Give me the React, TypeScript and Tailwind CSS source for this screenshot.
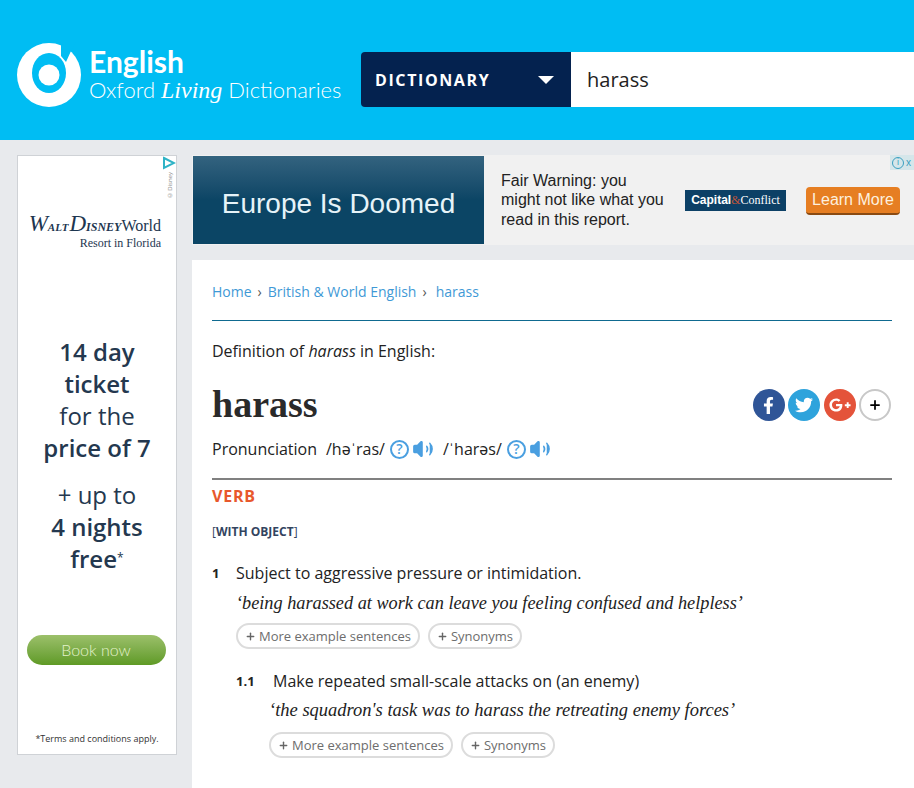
import { Volume2, Plus } from "lucide-react"
import { FaFacebookF, FaTwitter, FaGooglePlusG } from "react-icons/fa"

function Logo() {
  return (
    <svg width="66" height="66" viewBox="0 0 66 66" className="shrink-0">
      <circle cx="33" cy="33" r="32" fill="#fff" />
      <ellipse cx="33" cy="31" rx="17" ry="20" fill="#00bdf3" />
      <polygon points="45,-1 45,14 50,20 55,9 60,-1" fill="#00bdf3" />
      <circle cx="33" cy="33" r="10.5" fill="#fff" />
    </svg>
  )
}

function HelpAudio() {
  return (
    <span className="inline-flex items-center gap-[3px] ml-[5px]">
      <span className="w-[19px] h-[19px] rounded-full border-2 border-[#4a9fe0] text-[#4a9fe0] text-[14px] font-semibold flex items-center justify-center leading-none">
        ?
      </span>
      <Volume2 size={22} className="text-[#4a9fe0]" fill="#4a9fe0" strokeWidth={1.5} />
    </span>
  )
}

function Pill({ label }: { label: string }) {
  return (
    <span className="h-[26px] px-[7px] rounded-full border-2 border-[#dcdcdc] text-[13px] text-[#6d6d6d] flex items-center gap-[3px] leading-none">
      <Plus size={11} strokeWidth={3} className="text-[#666]" />
      {label}
    </span>
  )
}

function Social({ className, children }: { className: string; children: React.ReactNode }) {
  return (
    <span className={`w-[32px] h-[32px] rounded-full flex items-center justify-center text-white ${className}`}>
      {children}
    </span>
  )
}

export default function App() {
  return (
    <div className="w-[914px] h-[788px] overflow-hidden bg-[#e8eaed] font-['Open_Sans',sans-serif] text-[#222]">
      {/* Header */}
      <header className="h-[140px] bg-[#00bdf3] flex items-start pl-[16px] pt-[42px]">
        <Logo />
        <div className="ml-[7px] w-[260px] text-white font-['Lato',sans-serif] mt-[4px]">
          <div className="text-[30px] font-bold leading-[30px]">English</div>
          <div className="text-[22px] font-light leading-[28px] whitespace-nowrap">
            Oxford <span className="inline-block leading-[22px] font-['Liberation_Serif',serif] italic text-[24px]">Living</span> Dictionaries
          </div>
        </div>
        <div className="ml-[12px] flex-1 h-[55px] flex mt-[10px]">
          <div className="w-[210px] bg-[#04224f] rounded-l-[4px] flex items-center justify-between pl-[14px] pr-[17px] text-white">
            <span className="text-[16px] font-bold tracking-[1.6px]">DICTIONARY</span>
            <span className="w-0 h-0 border-l-[8px] border-r-[8px] border-t-[8px] border-l-transparent border-r-transparent border-t-white" />
          </div>
          <div className="flex-1 bg-white flex items-center pl-[16px] text-[20px] text-[#222]">harass</div>
        </div>
      </header>

      <div className="flex items-start pl-[17px] pt-[15px] gap-[15px]">
        {/* Side ad */}
        <aside className="relative w-[160px] h-[600px] shrink-0 bg-white border border-[#cfd2d6] flex flex-col items-center text-[#24384f]">
          <svg width="14" height="14" viewBox="0 0 14 14" className="absolute top-0 right-0">
            <path d="M2 2 L12 7 L2 12 Z" fill="none" stroke="#2fb3c6" strokeWidth="2" />
          </svg>
          <span className="absolute top-[16px] right-[1px] text-[6px] text-[#888] [writing-mode:vertical-rl] rotate-180">©Disney</span>
          <div className="mt-[58px] self-start ml-[13px] w-[130px] font-['Liberation_Serif',serif] text-[#1d3650] text-right">
            <div className="whitespace-nowrap text-[16px] leading-[20px] flex items-baseline justify-end">
              <span className="italic text-[23px] leading-[20px]">W</span>
              <span className="italic font-bold text-[11px] leading-[20px]">ALT</span>
              <span className="italic text-[23px] leading-[20px] ml-[1px]">D</span>
              <span className="italic font-bold text-[12px] leading-[20px]">ISNEY</span>
              <span>World</span>
            </div>
            <div className="text-[12px] leading-[12px]">Resort in Florida</div>
          </div>
          <div className="mt-[87px] text-[24px] leading-[32px] text-center">
            <div className="font-semibold">14 day</div>
            <div className="font-semibold">ticket</div>
            <div>for the</div>
            <div className="font-semibold">price of 7</div>
            <div className="mt-[15px]">+ up to</div>
            <div className="font-semibold">4 nights</div>
            <div className="font-semibold">
              free<sup className="text-[12px] font-normal">*</sup>
            </div>
          </div>
          <div className="mt-[60px] -ml-[2px] w-[139px] h-[30px] rounded-full bg-gradient-to-b from-[#9cc06a] to-[#5f9a24] text-[#e4f2cc] text-[16px] font-['Lato',sans-serif] font-light flex items-center justify-center">
            Book now
          </div>
          <div className="mt-[67px] text-[9px] text-[#333]">*Terms and conditions apply.</div>
        </aside>

        <div className="flex-1 min-w-0">
          {/* Top ad */}
          <div className="relative h-[90px] bg-[#f1f1f1] flex items-center pl-[1px] font-['Liberation_Sans',sans-serif]">
            <div className="w-[291px] h-[88px] pt-[8px] bg-gradient-to-b from-[#33637f] via-[#0b4565] to-[#0b4565] text-[#e6f3f8] text-[28px] flex items-center justify-center">
              Europe Is Doomed
            </div>
            <div className="ml-[17px] w-[168px] text-[16px] leading-[19.5px] text-[#222]">
              Fair Warning: you might not like what you read in this report.
            </div>
            <div className="ml-[16px] w-[101px] h-[21px] bg-[#0c4066] text-white text-[12px] flex items-center justify-center whitespace-nowrap font-['Liberation_Serif',serif]">
              <span className="font-bold font-['Liberation_Sans',sans-serif]">Capital</span>
              <span className="text-[#c0563a]">&amp;</span>
              Conflict
            </div>
            <div className="ml-[20px] mt-[2px] w-[94px] h-[28px] bg-[#e67e22] border-b-2 border-[#8a4a12] rounded-[4px] text-[#fdf0df] text-[16px] flex items-center justify-center">
              Learn More
            </div>
            <div className="absolute top-0 right-0 h-[15px] w-[24px] bg-[#d5e6ea] flex items-center text-[#3a9fc0] text-[10px] leading-none pl-[2px] gap-[2px]">
              <span className="w-[12px] h-[12px] rounded-full border border-[#3a9fc0] flex items-center justify-center text-[9px]">i</span>
              <span>x</span>
            </div>
          </div>

          {/* Entry */}
          <main className="mt-[15px] bg-white pl-[20px] pr-[22px] h-[600px]">
            <div className="h-[61px] border-b border-[#0f6a90] flex items-center gap-[6px] text-[14px] text-[#3f99d6] pt-[2px]">
              <span>Home</span>
              <span className="text-[#555]">›</span>
              <span>British &amp; World English</span>
              <span className="text-[#555]">›</span>
              <span className="ml-[3px]">harass</span>
            </div>
            <p className="mt-[19px] text-[16px] leading-[22px]">
              Definition of <em>harass</em> in English:
            </p>
            <div className="mt-[22px] flex items-center justify-between h-[42px]">
              <h1 className="font-['Liberation_Serif',serif] font-bold text-[38px] text-[#2a2a2a] leading-none -mt-[2px]">harass</h1>
              <div className="flex items-center gap-[3.5px] mr-[1px]">
                <Social className="bg-[#2f5597]"><FaFacebookF size={17} /></Social>
                <Social className="bg-[#2ea3dc]"><FaTwitter size={18} /></Social>
                <Social className="bg-[#e4533a]"><FaGooglePlusG size={22} /></Social>
                <span className="w-[32px] h-[32px] rounded-full border-2 border-[#c8c8c8] flex items-center justify-center text-black">
                  <Plus size={14} strokeWidth={3} />
                </span>
              </div>
            </div>
            <div className="mt-[10px] flex items-center text-[16px] h-[26px]">
              <span>Pronunciation</span>
              <span className="ml-[9px]">/həˈras/</span>
              <HelpAudio />
              <span className="ml-[9px]">/ˈharəs/</span>
              <HelpAudio />
            </div>
            <div className="mt-[16px] border-t-2 border-[#808080] pt-[5px] text-[16px] font-bold text-[#e8582c] tracking-[0.8px] leading-[22px]">
              VERB
            </div>
            <div className="mt-[15px] text-[12px] leading-[20px] text-[#33445f]">
              [<span className="font-bold">WITH OBJECT</span>]
            </div>

            <div className="mt-[19px] flex">
              <span className="w-[24px] text-[13px] font-bold leading-[24px]">1</span>
              <div>
                <p className="text-[16px] leading-[24px]">Subject to aggressive pressure or intimidation.</p>
                <p className="mt-[5px] font-['Liberation_Serif',serif] italic text-[18.25px] leading-[26px] text-[#222] whitespace-nowrap">
                  ‘being harassed at work can leave you feeling confused and helpless’
                </p>
                <div className="mt-[7px] flex gap-[8px]">
                  <Pill label="More example sentences" />
                  <Pill label="Synonyms" />
                </div>
              </div>
            </div>

            <div className="mt-[20px] pl-[24px]">
              <div className="flex">
                <span className="w-[37px] text-[13px] font-bold leading-[24px]">1.1</span>
                <p className="text-[16px] leading-[24px]">Make repeated small-scale attacks on (an enemy)</p>
              </div>
              <div className="pl-[33px]">
                <p className="mt-[4px] font-['Liberation_Serif',serif] italic text-[18.5px] leading-[26px] text-[#222] whitespace-nowrap">
                  ‘the squadron's task was to harass the retreating enemy forces’
                </p>
                <div className="mt-[9px] flex gap-[8px]">
                  <Pill label="More example sentences" />
                  <Pill label="Synonyms" />
                </div>
              </div>
            </div>
          </main>
        </div>
      </div>
    </div>
  )
}
